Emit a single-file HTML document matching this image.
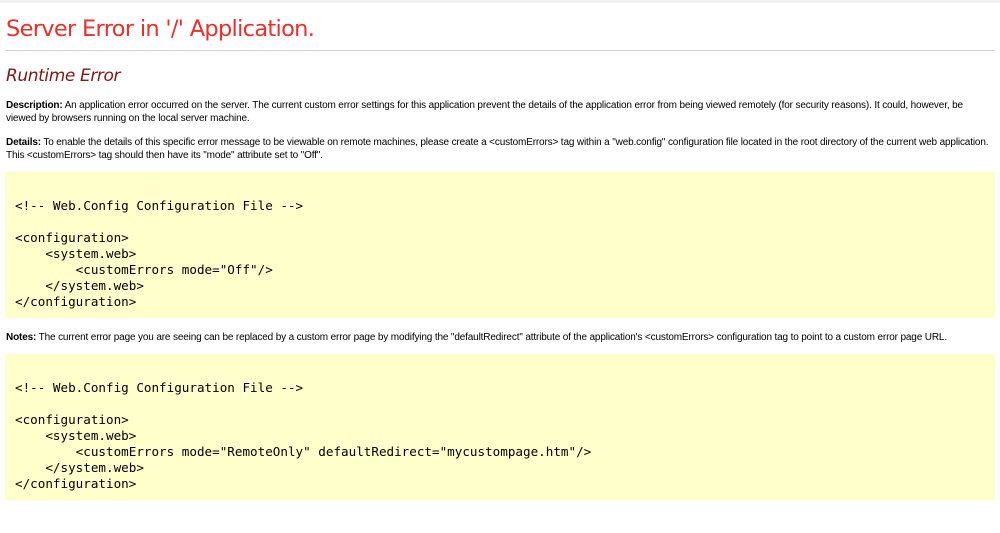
<!DOCTYPE html>
<html><head><meta charset="utf-8">
<style>
html,body{margin:0;padding:0;background:#fff;}
body{border-top:3px solid #f0f0f0;font-family:"Liberation Sans",Arial,sans-serif;font-size:10px;line-height:13px;color:#000;padding:0 5px;letter-spacing:-0.15px;}
h1{font-family:"DejaVu Sans",sans-serif;font-weight:normal;font-size:22.5px;color:#e8302a;margin:0;position:absolute;left:6px;top:23px;letter-spacing:-0.7px;white-space:nowrap;}
hr{position:absolute;left:5px;right:5px;top:50px;margin:0;border:0;height:1px;background:#cfcfcf;}
h2{font-family:"DejaVu Sans",sans-serif;font-weight:normal;font-style:italic;font-size:17px;color:#7b1a14;margin:0;position:absolute;left:6px;top:70px;letter-spacing:-0.4px;}
.p{position:absolute;left:6px;right:6px;}
b{font-weight:bold;}
.box{position:absolute;left:5px;right:5px;background:#ffffcc;}
pre{font-family:"DejaVu Sans Mono",monospace;font-size:12.6px;line-height:16px;margin:0;padding:10px 10px 6px;letter-spacing:0;}
</style></head><body>
<h1>Server Error in '/' Application.</h1>
<hr>
<h2>Runtime Error</h2>
<div class="p" style="top:99px;right:0"><span style="white-space:nowrap"><b>Description:</b> An application error occurred on the server. The current custom error settings for this application prevent the details of the application error from being viewed remotely (for security reasons). It could, however, be</span><br>viewed by browsers running on the local server machine.</div>
<div class="p" style="top:136px"><b>Details:</b> To enable the details of this specific error message to be viewable on remote machines, please create a &lt;customErrors&gt; tag within a "web.config" configuration file located in the root directory of the current web application. This &lt;customErrors&gt; tag should then have its "mode" attribute set to "Off".</div>
<div class="box" style="top:172px;height:146px"><pre>

&lt;!-- Web.Config Configuration File --&gt;

&lt;configuration&gt;
    &lt;system.web&gt;
        &lt;customErrors mode="Off"/&gt;
    &lt;/system.web&gt;
&lt;/configuration&gt;</pre></div>
<div class="p" style="top:331px"><b>Notes:</b> The current error page you are seeing can be replaced by a custom error page by modifying the "defaultRedirect" attribute of the application's &lt;customErrors&gt; configuration tag to point to a custom error page URL.</div>
<div class="box" style="top:354px;height:146px"><pre>

&lt;!-- Web.Config Configuration File --&gt;

&lt;configuration&gt;
    &lt;system.web&gt;
        &lt;customErrors mode="RemoteOnly" defaultRedirect="mycustompage.htm"/&gt;
    &lt;/system.web&gt;
&lt;/configuration&gt;</pre></div>
</body></html>
